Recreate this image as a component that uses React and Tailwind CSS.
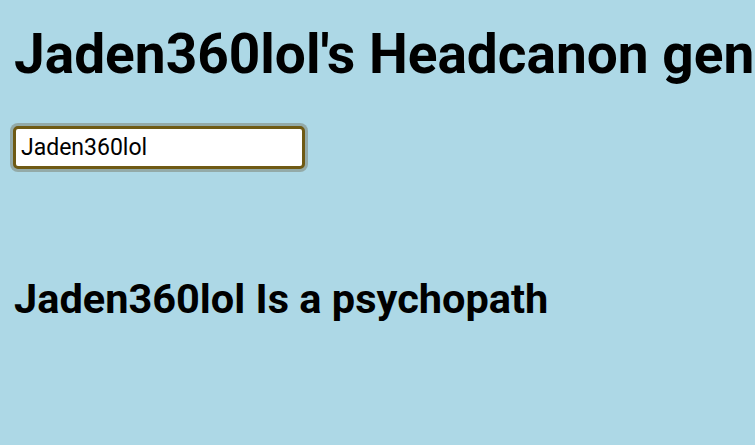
export default function App() {
  return (
    <div
      className="min-h-screen w-full overflow-hidden bg-[#add8e6] text-black"
      style={{ fontFamily: 'Roboto, "Noto Sans", sans-serif' }}
    >
      <div className="pl-[14px] pt-[22px]">
        {/* Title */}
        <h1 className="whitespace-nowrap text-[55px] font-bold leading-[64px]">
          Jaden360lol's Headcanon generator
        </h1>

        {/* Name input */}
        <div className="mt-[40px] ml-[-1px]">
          <input
            type="text"
            autoFocus
            defaultValue="Jaden360lol"
            className="h-[43px] w-[292px] rounded-[5px] border-[3px] border-[#6f5a14] bg-white px-[5px] text-[23px] text-black caret-black shadow-[0_0_0_3px_#93aaa8] outline-none"
          />
        </div>

        {/* Result */}
        <h2 className="mt-[106px] whitespace-nowrap text-[41.5px] font-bold leading-[48px]">
          Jaden360lol Is a psychopath
        </h2>
      </div>
    </div>
  )
}
